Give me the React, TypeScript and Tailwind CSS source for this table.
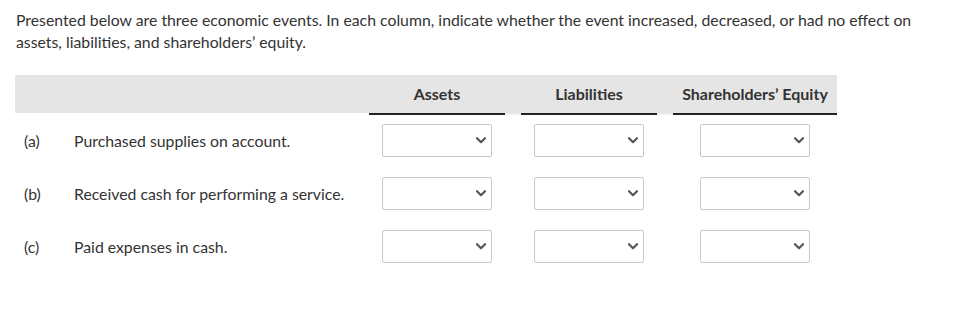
import React from 'react';

const rows = [
  { label: '(a)', text: 'Purchased supplies on account.' },
  { label: '(b)', text: 'Received cash for performing a service.' },
  { label: '(c)', text: 'Paid expenses in cash.' },
];

const Chevron = () => (
  <svg width="10" height="7" viewBox="0 0 10 7" fill="none">
    <path d="M1 1.2L5 5.2L9 1.2" stroke="#555" strokeWidth="2.2" strokeLinecap="round" strokeLinejoin="round" />
  </svg>
);

const SelectBox = () => (
  <div className="w-[110px] h-[33px] border border-[#c8c8c8] rounded-[2px] bg-white flex items-center justify-end pr-[5px]">
    <Chevron />
  </div>
);

const Cell = ({ width }: { width: string }) => (
  <div className={`${width} flex justify-center`}>
    <SelectBox />
  </div>
);

export default function App() {
  return (
    <div className="w-[963px] h-[316px] bg-white text-[#333] font-['Lato','Liberation_Sans',sans-serif]">
      <p className="pl-[16px] pt-[9px] pr-[40px] text-[15.8px] leading-[22px]">
        Presented below are three economic events. In each column, indicate whether the event increased, decreased, or had no effect on assets, liabilities, and shareholders’ equity.
      </p>

      <div className="ml-[15px] mt-[22px] w-[822px]">
        {/* header */}
        <div className="flex items-start">
          <div className="w-[354px] h-[38px] bg-[#e5e5e5]" />
          <div className="w-[136px] h-[40px] bg-[#e5e5e5] border-b-2 border-[#222] flex items-center justify-center text-[16px] font-bold">
            Assets
          </div>
          <div className="w-[16px] h-[40px] bg-[#e5e5e5] border-b-2 border-[#eeeeee]" />
          <div className="w-[136px] h-[40px] bg-[#e5e5e5] border-b-2 border-[#222] flex items-center justify-center text-[16px] font-bold">
            Liabilities
          </div>
          <div className="w-[16px] h-[40px] bg-[#e5e5e5] border-b-2 border-[#eeeeee]" />
          <div className="w-[164px] h-[40px] bg-[#e5e5e5] border-b-2 border-[#222] flex items-center justify-center text-[16px] font-bold">
            Shareholders’ Equity
          </div>
        </div>

        {/* rows */}
        <div className="-mt-px">
          {rows.map((r) => (
            <div key={r.label} className="flex items-center h-[53px] text-[15.8px]">
              <div className="w-[354px] flex">
                <span className="w-[59px] pl-[9px]">{r.label}</span>
                <span>{r.text}</span>
              </div>
              <Cell width="w-[136px]" />
              <div className="w-[16px]" />
              <Cell width="w-[136px]" />
              <div className="w-[16px]" />
              <Cell width="w-[164px]" />
            </div>
          ))}
        </div>
      </div>
    </div>
  );
}
